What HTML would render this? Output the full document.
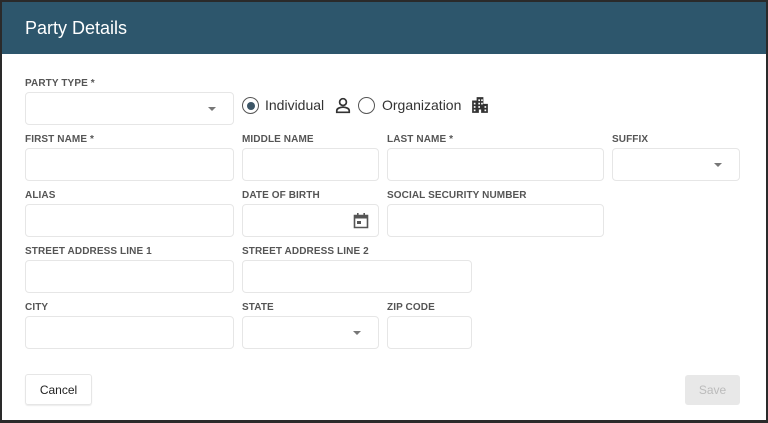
<!DOCTYPE html>
<html><head><style>
*{box-sizing:border-box;margin:0;padding:0}
body{width:768px;height:423px;background:#fff;font-family:"Liberation Sans",sans-serif;position:relative;overflow:hidden}
.frame{position:absolute;left:0;top:0;width:768px;height:423px;border:2px solid #2a2a2a;border-bottom-width:3px}
.hdr{position:absolute;left:2px;top:2px;width:764px;height:52px;background:#2d566c}
.hdr span{position:absolute;left:23px;top:16px;color:#fff;font-size:18px}
.lbl{position:absolute;font-size:10px;font-weight:bold;color:#555;letter-spacing:0.1px}
.box{position:absolute;border:1px solid #e6e6e6;border-radius:4px;height:33px;background:#fff}
.caret{position:absolute;width:0;height:0;border-left:4px solid transparent;border-right:4px solid transparent;border-top:4px solid #777}
.btn{position:absolute;border-radius:3px;font-size:12px;display:flex;align-items:center;justify-content:center}
</style></head><body>
<div class="frame"></div>
<div class="hdr"><span>Party Details</span></div>

<div class="lbl" style="left:25px;top:78px">PARTY TYPE *</div>
<div class="box" style="left:25px;top:92px;width:209px"><div class="caret" style="left:182px;top:14px"></div></div>
<div style="position:absolute;left:242px;top:97px;width:17px;height:17px;border:1.5px solid #555;border-radius:50%"></div>
<div style="position:absolute;left:246.5px;top:101.5px;width:8px;height:8px;background:#3c5566;border-radius:50%"></div>
<div style="position:absolute;left:265px;top:97px;font-size:14px;color:#333">Individual</div>
<svg style="position:absolute;left:335px;top:97px" width="16" height="17" viewBox="0 0 14 15"><circle cx="7" cy="4.5" r="3" fill="none" stroke="#333" stroke-width="1.5"/><path d="M1.5 13.5v-1.5c0-2 3-3 5.5-3s5.5 1 5.5 3v1.5z" fill="none" stroke="#333" stroke-width="1.5"/></svg>
<div style="position:absolute;left:358px;top:97px;width:17px;height:17px;border:1.5px solid #555;border-radius:50%"></div>
<div style="position:absolute;left:382px;top:97px;font-size:14px;color:#333">Organization</div>
<svg style="position:absolute;left:471px;top:96px" width="18" height="18" viewBox="0 0 16 16"><path d="M1 15V4h4V1h6v6h4v8H9v-3H7v3z" fill="#333"/><g fill="#fff"><rect x="2.5" y="6" width="1.5" height="1.5"/><rect x="2.5" y="9" width="1.5" height="1.5"/><rect x="2.5" y="12" width="1.5" height="1.5"/><rect x="6.5" y="3" width="1.5" height="1.5"/><rect x="6.5" y="6" width="1.5" height="1.5"/><rect x="6.5" y="9" width="1.5" height="1.5"/><rect x="9" y="3" width="1.5" height="1.5"/><rect x="9" y="6" width="1.5" height="1.5"/><rect x="12" y="9" width="1.5" height="1.5"/><rect x="12" y="12" width="1.5" height="1.5"/></g></svg>

<div class="lbl" style="left:25px;top:134px">FIRST NAME *</div>
<div class="lbl" style="left:242px;top:134px">MIDDLE NAME</div>
<div class="lbl" style="left:387px;top:134px">LAST NAME *</div>
<div class="lbl" style="left:612px;top:134px">SUFFIX</div>
<div class="box" style="left:25px;top:148px;width:209px"></div>
<div class="box" style="left:242px;top:148px;width:137px"></div>
<div class="box" style="left:387px;top:148px;width:217px"></div>
<div class="box" style="left:612px;top:148px;width:128px"><div class="caret" style="left:101px;top:14px"></div></div>

<div class="lbl" style="left:25px;top:190px">ALIAS</div>
<div class="lbl" style="left:242px;top:190px">DATE OF BIRTH</div>
<div class="lbl" style="left:387px;top:190px">SOCIAL SECURITY NUMBER</div>
<div class="box" style="left:25px;top:204px;width:209px"></div>
<div class="box" style="left:242px;top:204px;width:137px">
<svg style="position:absolute;left:110px;top:7px" width="16" height="17" viewBox="0 0 16 17"><path d="M1.5 3.5h13v12h-13z" fill="none" stroke="#555" stroke-width="1.6"/><rect x="1.5" y="3.5" width="13" height="3" fill="#555"/><rect x="4" y="1" width="1.6" height="3" fill="#555"/><rect x="10.4" y="1" width="1.6" height="3" fill="#555"/><rect x="4" y="9" width="4" height="3" fill="#555"/></svg></div>
<div class="box" style="left:387px;top:204px;width:217px"></div>

<div class="lbl" style="left:25px;top:246px">STREET ADDRESS LINE 1</div>
<div class="lbl" style="left:242px;top:246px">STREET ADDRESS LINE 2</div>
<div class="box" style="left:25px;top:260px;width:209px"></div>
<div class="box" style="left:242px;top:260px;width:230px"></div>

<div class="lbl" style="left:25px;top:302px">CITY</div>
<div class="lbl" style="left:242px;top:302px">STATE</div>
<div class="lbl" style="left:387px;top:302px">ZIP CODE</div>
<div class="box" style="left:25px;top:316px;width:209px"></div>
<div class="box" style="left:242px;top:316px;width:137px"><div class="caret" style="left:110px;top:14px"></div></div>
<div class="box" style="left:387px;top:316px;width:85px"></div>

<div class="btn" style="left:25px;top:374px;width:67px;height:31px;border:1px solid #e6e6e6;color:#222;box-shadow:0 1px 1px rgba(0,0,0,0.08)">Cancel</div>
<div class="btn" style="left:685px;top:375px;width:55px;height:30px;background:#e8e8e8;color:#bbb">Save</div>
</body></html>
